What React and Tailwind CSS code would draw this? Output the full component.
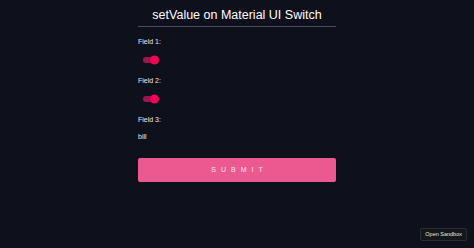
import { useState } from "react";

function Toggle({ on, onChange }) {
  return (
    <button
      type="button"
      onClick={() => onChange(!on)}
      className="relative ml-[5px] w-[15px] h-[6px] rounded-full bg-[#c2185b]/80"
    >
      <span
        className={
          "absolute top-1/2 -translate-y-1/2 w-[9px] h-[9px] rounded-full bg-[#f50057] shadow " +
          (on ? "left-[7px]" : "left-[-2px]")
        }
      />
    </button>
  );
}

export default function App() {
  const [field1, setField1] = useState(true);
  const [field2, setField2] = useState(true);

  return (
    <div className="relative w-full min-h-screen h-[248px] bg-[#0e101c] text-white font-['Liberation_Sans',Arial,sans-serif]">
      <div className="mx-auto w-[198px] pt-[7px]">
        <h1 className="text-center text-[12.5px] leading-[16px] pb-[3px] border-b border-[#474c63] font-normal whitespace-nowrap">
          setValue on Material UI Switch
        </h1>

        <div className="flex flex-col pt-[10px] text-[#e8e8ea]">
          <label className="text-[7px] leading-[9px]">Field 1:</label>
          <div className="h-[17px] flex items-center mt-[5px]">
            <Toggle on={field1} onChange={setField1} />
          </div>

          <label className="text-[7px] leading-[9px] mt-[8px]">Field 2:</label>
          <div className="h-[17px] flex items-center mt-[5px]">
            <Toggle on={field2} onChange={setField2} />
          </div>

          <label className="text-[7px] leading-[9px] mt-[8px]">Field 3:</label>
          <p className="text-[7px] leading-[9px] mt-[8px]">bill</p>

          <button
            type="submit"
            className="mt-[17px] h-[24px] w-full rounded-[2px] bg-[#ec5990] text-[#f8e3ec] text-[7px] tracking-[5px] uppercase pl-[5px]"
          >
            Submit
          </button>
        </div>
      </div>

      <button
        type="button"
        className="absolute right-[7px] bottom-[7px] px-[4px] h-[13px] rounded-[2px] border border-[#2a2c36] bg-[#151619] text-[#e6e6e6] text-[5.5px]"
      >
        Open Sandbox
      </button>
    </div>
  );
}
